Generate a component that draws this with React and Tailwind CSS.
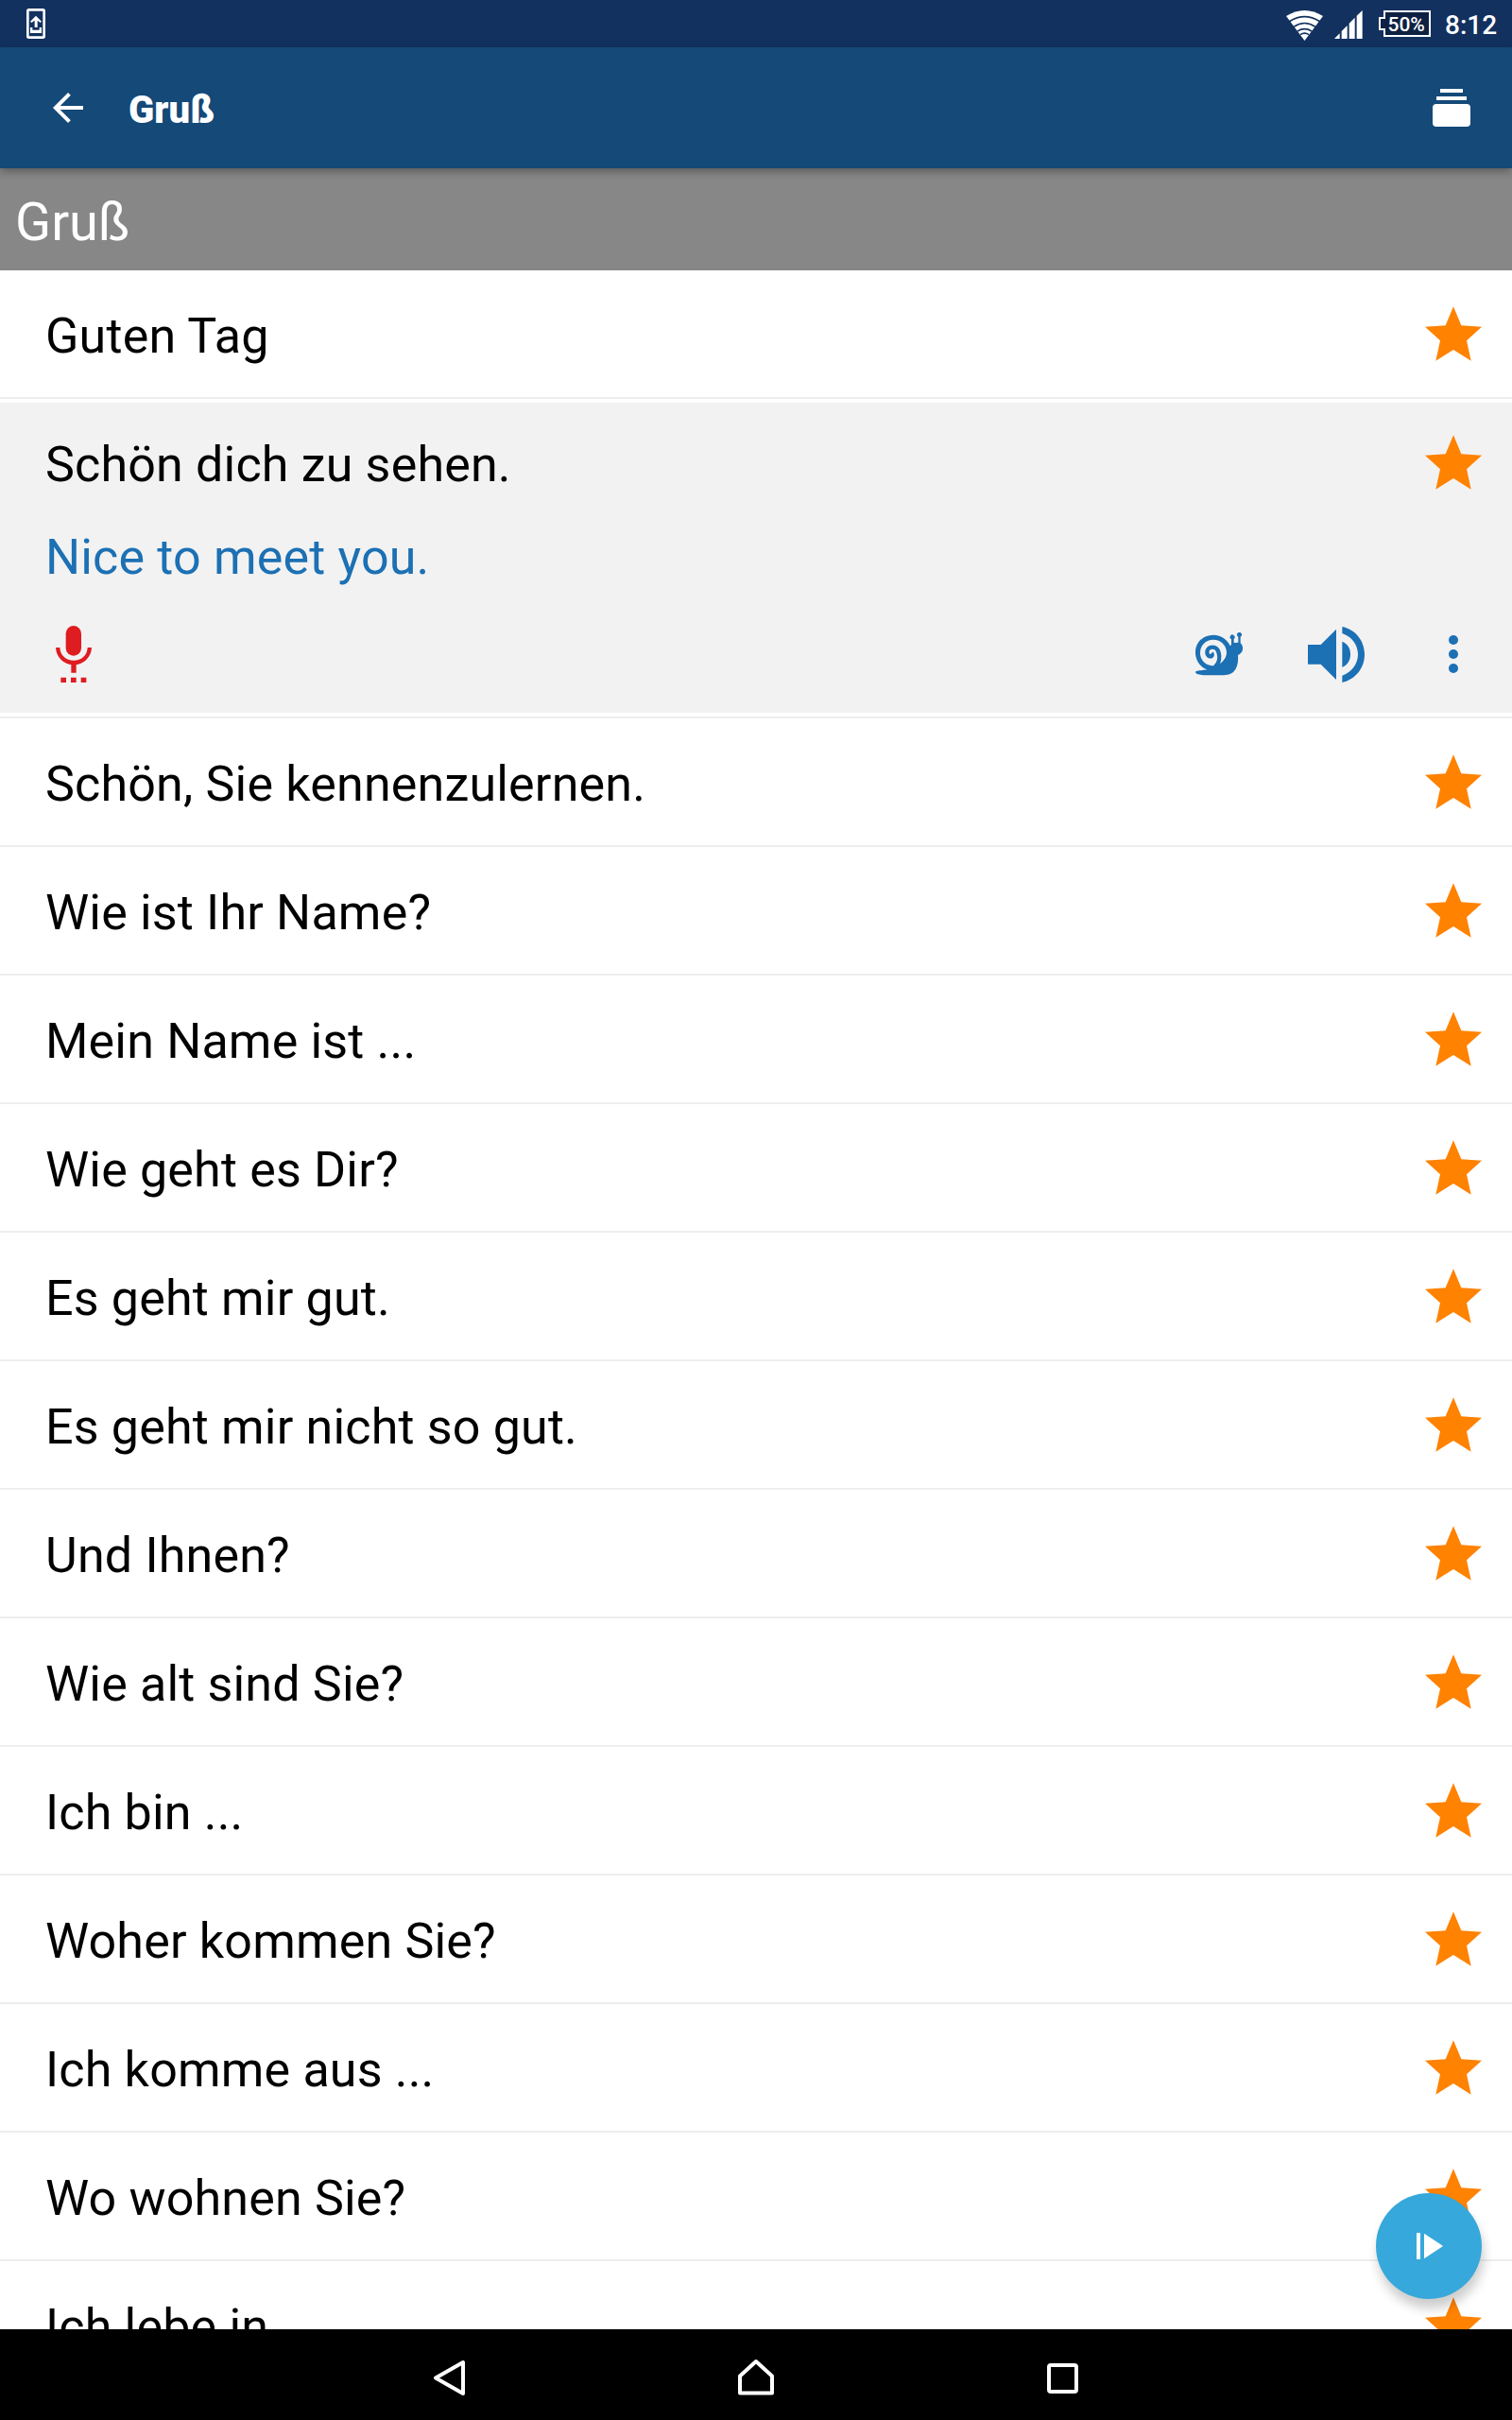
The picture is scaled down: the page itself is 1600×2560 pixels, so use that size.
import { useState } from "react";

const phrases = [
    { id: 1, text: "Guten Tag" },
    { id: 2, text: "Schön dich zu sehen.", translation: "Nice to meet you." },
    { id: 3, text: "Schön, Sie kennenzulernen." },
    { id: 4, text: "Wie ist Ihr Name?" },
    { id: 5, text: "Mein Name ist ..." },
    { id: 6, text: "Wie geht es Dir?" },
    { id: 7, text: "Es geht mir gut." },
    { id: 8, text: "Es geht mir nicht so gut." },
    { id: 9, text: "Und Ihnen?" },
    { id: 10, text: "Wie alt sind Sie?" },
    { id: 11, text: "Ich bin ..." },
    { id: 12, text: "Woher kommen Sie?" },
    { id: 13, text: "Ich komme aus ..." },
    { id: 14, text: "Wo wohnen Sie?" },
    { id: 15, text: "Ich lebe in ..." },
];

const Star = () => (
    <svg className="w-[60px] h-[58px] shrink-0" viewBox="0 0 180 174" fill="#ff8200">
        <path d="M90 1L115 61L180 65L132 109L146 173L90 138L34 173L48 109L0 65L65 61Z" />
    </svg>
);

const MicIcon = () => (
    <svg className="w-[38px] h-[60px]" viewBox="0 0 114 180" fill="#df1c20">
        <rect x="32" y="0" width="49" height="95" rx="24.5" />
        <path
            d="M6.5 69C8 98 30 117 57 117S106 98 107.5 69"
            fill="none"
            stroke="#df1c20"
            strokeWidth="13"
        />
        <path d="M49 118h16v31H49zM16 164h17v16H16zM48 164h17v16H48zM80 164h17v16H80z" />
    </svg>
);

const SnailIcon = () => (
    <svg className="w-[50px] h-[46px]" viewBox="0 0 150 138">
        <path
            fill="#1c70b4"
            d="M0 126C0 121 20 120 38 118C14 110 0 88 0 64C0 32 24 8 57 8C82 8 103 24 110 43L114 39V22A7.5 7.5 0 1 1 122 21V33L136 32V14A7.5 7.5 0 1 1 143 14V34C148 39 151 46 150 54C149 62 143 69 135 72C137 96 132 114 122 124C112 134 100 136 85 136H40C18 136 0 133 0 126Z"
        />
        <path
            fill="#f2f2f2"
            d="M57 23C81 23 99 41 99 64C99 80 88 94 72 103C62 107 50 107 41 103C25 96 15 82 15 65C15 41 33 23 57 23Z"
        />
        <path
            fill="none"
            stroke="#1c70b4"
            strokeWidth="13"
            d="M62 110C76 98 78 79 74 65C71 52 64 47 54 47C43 47 37 54 37 63C37 72 43 77 50 76C54 74 54 69 51 66"
        />
    </svg>
);

const SpeakerIcon = () => (
    <svg className="w-[60px] h-[59px]" viewBox="0 0 180 177" fill="#1c70b4">
        <path d="M0 57H41L90 8V168L41 119H0Z" />
        <path d="M109 47C127 54 135 70 135 88S127 121 109 129Z" />
        <path d="M109 0C150 8 180 44 180 88S150 168 109 177V155C137 146 159 120 159 88S137 30 109 21Z" />
    </svg>
);

const MoreIcon = () => (
    <svg className="w-[10px] h-10" viewBox="0 0 10 40" fill="#1c70b4">
        <circle cx="5" cy="5" r="5" />
        <circle cx="5" cy="20" r="5" />
        <circle cx="5" cy="35" r="5" />
    </svg>
);

const StatusBar = () => (
    <div className="h-[50px] shrink-0 bg-[#12315f] flex items-start text-white font-medium">
        <svg className="w-5 h-8 ml-7 mt-[9px]" viewBox="0 0 60 96">
            <rect x="4" y="4" width="52" height="88" rx="4" fill="none" stroke="white" strokeWidth="8" />
            <path
                fill="white"
                d="M30 23L48 41L44 45L35 38V60H26V38L16 45L12 41ZM12 60h7v8h22v-8h7v18H12z"
            />
        </svg>
        <svg className="w-[39px] h-8 ml-auto mt-[11px]" viewBox="0 0 117 96">
            <path d="M58.5 96L0 18Q58.5 -18 117 18Z" fill="white" />
            <g fill="none" stroke="#12315f" strokeWidth="5">
                <path d="M10 35Q58.5 5 107 35" />
                <path d="M24 52Q58.5 29 93 52" />
                <path d="M36 66Q58.5 52 81 66" />
                <path d="M45 77Q58.5 68 72 77" />
            </g>
        </svg>
        <svg className="w-[30px] h-[30px] ml-3 mt-[11px]" viewBox="0 0 90 90" fill="white">
            <path d="M0 90L17 73V90ZM23 66L41 48V90H23ZM47 41L65 23V90H47ZM71 17L89 0V90H71Z" />
        </svg>
        <div className="relative w-[55px] h-7 ml-[17px] mt-[11px]">
            <svg className="w-full h-full" viewBox="0 0 55 28">
                <path d="M6 1H54V27H6V20H1V8H6Z" fill="#0e2142" stroke="white" strokeWidth="2" />
            </svg>
            <span className="absolute left-[9.5px] top-[2px] text-[21px] leading-[26px]">50%</span>
        </div>
        <span className="w-[55px] ml-[15px] mr-4 mt-[10px] text-[28px] leading-[34px]">8:12</span>
    </div>
);

const Toolbar = () => (
    <div className="relative z-10 h-32 shrink-0 bg-[#144978] flex items-center text-white shadow-[0_3px_9px_rgba(0,0,0,0.35)]">
        <svg className="w-12 h-12 ml-12" viewBox="0 0 24 24" fill="white">
            <path d="M20 11H7.83l5.59-5.59L12 4l-8 8 8 8 1.41-1.41L7.83 13H20v-2z" />
        </svg>
        <h1 className="ml-10 mt-[5px] text-[40px] leading-none font-black">Gruß</h1>
        <svg className="w-10 h-10 ml-auto mr-11" viewBox="0 0 40 40" fill="white">
            <path d="M8 0h24v4H8zM4 8h32v4H4z" />
            <rect y="16" width="40" height="24" rx="4" />
        </svg>
    </div>
);

const PhraseRow = ({ phrase, open, onClick }) => {
    const header = (
        <div className="h-[58px] flex justify-between pl-12 pr-8">
            <span className="mt-[2px] text-[52px] leading-[60px] tracking-[0.18px]">{phrase.text}</span>
            <Star />
        </div>
    );

    if (!open) {
        return (
            <li onClick={onClick} className="h-[136px] shrink-0 pt-[38px] border-b-2 border-[#eeeeee]">
                {header}
            </li>
        );
    }

    return (
        <li onClick={onClick} className="h-[338px] shrink-0 py-1 border-b-2 border-[#eeeeee]">
            <div className="h-[328px] bg-[#f2f2f2] pt-[34px]">
                {header}
                <p className="pl-12 mt-[42px] text-[52px] leading-[60px] tracking-[0.18px] text-[#1c70b4]">
                    {phrase.translation}
                </p>
                <div className="h-[60px] mt-[42px] pl-[59px] pr-[57px] flex items-center">
                    <MicIcon />
                    <div className="ml-auto flex items-center">
                        <SnailIcon />
                        <div className="ml-[69px] mr-[89px]">
                            <SpeakerIcon />
                        </div>
                        <MoreIcon />
                    </div>
                </div>
            </div>
        </li>
    );
};

const NavBar = () => (
    <div className="h-24 shrink-0 bg-black flex items-center justify-center">
        <div className="w-[324px] flex justify-center">
            <svg className="w-9 h-10 mt-1.5" viewBox="0 0 36 40" fill="none" stroke="white" strokeWidth="4" strokeLinejoin="round">
                <path d="M3 20.5L32 4V37Z" />
            </svg>
        </div>
        <div className="w-[324px] flex justify-center">
            <svg className="w-10 h-10 mt-1.5" viewBox="0 0 40 40" fill="none" stroke="white" strokeWidth="4" strokeLinejoin="round">
                <path d="M20 3L37 18.5V36.5H3V18.5Z" />
            </svg>
        </div>
        <div className="w-[324px] flex justify-center">
            <div className="w-[33px] h-8 mt-2 border-4 border-white rounded-[4px]"></div>
        </div>
    </div>
);

const App = () => {
    const [openId, setOpenId] = useState(2);

    return (
        <div className="w-[1600px] h-[2560px] flex flex-col overflow-hidden bg-white text-black font-['Roboto',sans-serif]">
            <StatusBar />
            <Toolbar />
            <div className="h-[108px] shrink-0 bg-[#878787] px-4 pt-[21px]">
                <h2 className="text-[56px] leading-[72px] text-white">Gruß</h2>
            </div>

            <div className="relative flex-1 min-h-0 overflow-hidden">
                <ul className="flex flex-col">
                    {phrases.map((phrase) => (
                        <PhraseRow
                            key={phrase.id}
                            phrase={phrase}
                            open={phrase.id === openId}
                            onClick={() => setOpenId(phrase.id)}
                        />
                    ))}
                </ul>

                {/* Play all button */}
                <button className="absolute right-8 bottom-8 w-28 h-28 rounded-full bg-[#37a8db] flex items-center justify-center shadow-[2px_10px_12px_rgba(0,0,0,0.2)]">
                    <svg className="w-7 h-7 ml-[2px]" viewBox="0 0 28 28" fill="white">
                        <path d="M0 0h4v28H0zM8 0.7L28 14L8 27.3Z" />
                    </svg>
                </button>
            </div>

            <NavBar />
        </div>
    );
};

export default App;
